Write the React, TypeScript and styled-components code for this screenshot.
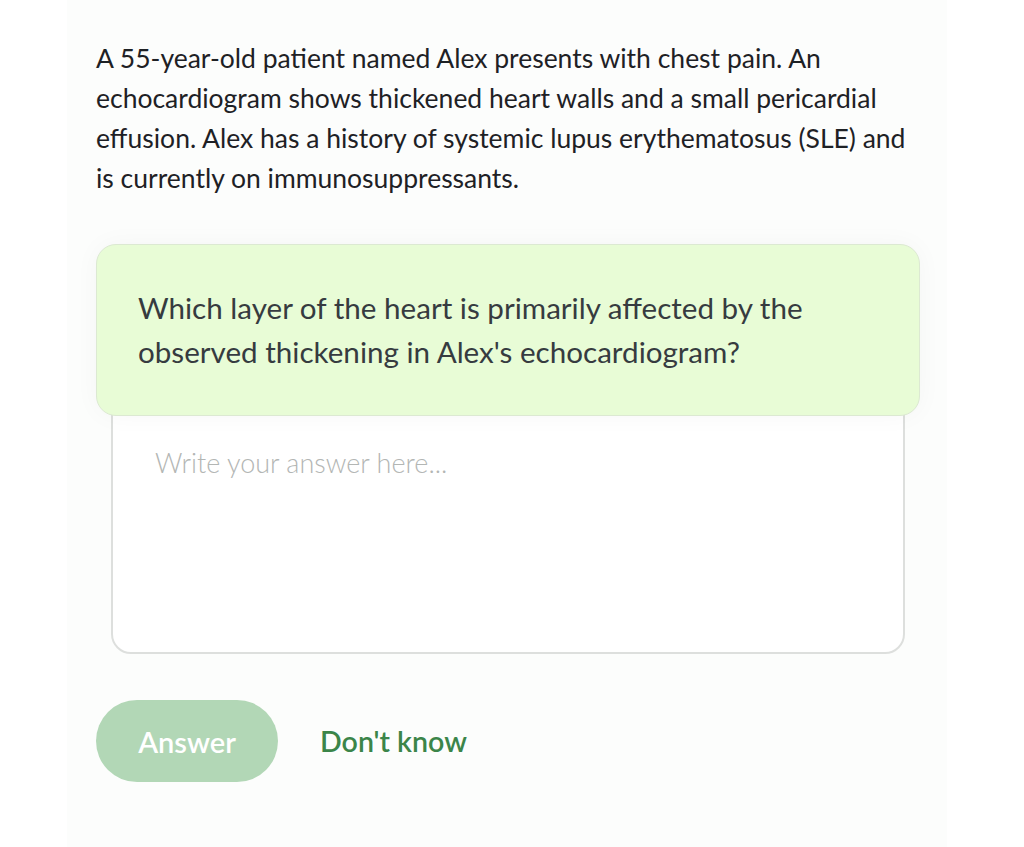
import React from "react";
import styled, { createGlobalStyle } from "styled-components";

const GlobalStyle = createGlobalStyle`
    html, body {
        margin: 0;
        padding: 0;
        background: #ffffff;
    }

    body {
        font-family: Lato, "Open Sans", sans-serif;
        -webkit-font-smoothing: antialiased;
    }
`;

const Panel = styled.main`
    box-sizing: border-box;
    margin-left: 67px;
    width: 880px;
    min-height: 847px;
    padding: 38px 27px 0 29px;
    background: #fcfdfc;
`;

const Story = styled.p`
    margin: 0;
    width: 826px;
    font-size: 26.5px;
    line-height: 40px;
    color: #1e2125;
`;

const QuestionCard = styled.div`
    position: relative;
    z-index: 1;
    box-sizing: border-box;
    margin-top: 46px;
    width: 824px;
    height: 172px;
    padding: 41px 36px 0 41px;
    background: #e8fcd6;
    border: 1px solid #dce9d2;
    border-radius: 20px;
    box-shadow: 0 0 26px rgba(0, 0, 0, 0.035);
`;

const Question = styled.h2`
    margin: 0;
    font-size: 29.6px;
    font-weight: 400;
    line-height: 44px;
    color: #363b40;
`;

const AnswerBox = styled.textarea`
    display: block;
    box-sizing: border-box;
    margin: -24px 0 0 15px;
    width: 794px;
    height: 262px;
    padding: 53px 42px 0;
    resize: none;
    font-family: inherit;
    font-size: 27px;
    font-weight: 300;
    line-height: 32px;
    color: #333;
    background: #ffffff;
    border: 2px solid #dddfdd;
    border-radius: 20px;
    outline: none;

    &::placeholder {
        color: #b3b6b4;
    }
`;

const Actions = styled.div`
    display: flex;
    align-items: center;
    gap: 42px;
    margin-top: 46px;
`;

const AnswerButton = styled.button`
    width: 182px;
    height: 82px;
    border: none;
    border-radius: 41px;
    background: #b2d7b6;
    color: #ffffff;
    font-family: inherit;
    font-size: 29px;
    font-weight: 600;
    cursor: not-allowed;
`;

const SkipButton = styled.button`
    padding: 0;
    border: none;
    background: none;
    color: #3b8549;
    font-family: inherit;
    font-size: 28.6px;
    font-weight: 600;
    cursor: pointer;
`;

export default function App() {
    return (
        <>
            <GlobalStyle />
            <Panel>
                <Story>
                    A 55-year-old patient named Alex presents with chest pain. An
                    echocardiogram shows thickened heart walls and a small pericardial
                    effusion. Alex has a history of systemic lupus erythematosus (SLE) and
                    is currently on immunosuppressants.
                </Story>
                <QuestionCard>
                    <Question>
                        Which layer of the heart is primarily affected by the observed
                        thickening in Alex's echocardiogram?
                    </Question>
                </QuestionCard>
                <AnswerBox placeholder="Write your answer here..." />
                <Actions>
                    <AnswerButton disabled>Answer</AnswerButton>
                    <SkipButton>Don't know</SkipButton>
                </Actions>
            </Panel>
        </>
    );
}
